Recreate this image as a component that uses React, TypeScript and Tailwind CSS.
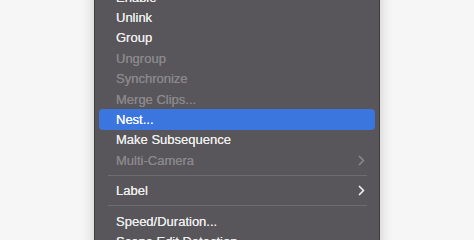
import { ReactNode } from "react";

type Item =
  | { kind: "item"; label: string; disabled?: boolean; active?: boolean; checked?: boolean; submenu?: boolean }
  | { kind: "sep" };

const items: Item[] = [
  { kind: "item", label: "Enable", checked: true },
  { kind: "item", label: "Unlink" },
  { kind: "item", label: "Group" },
  { kind: "item", label: "Ungroup", disabled: true },
  { kind: "item", label: "Synchronize", disabled: true },
  { kind: "item", label: "Merge Clips...", disabled: true },
  { kind: "item", label: "Nest...", active: true },
  { kind: "item", label: "Make Subsequence" },
  { kind: "item", label: "Multi-Camera", disabled: true, submenu: true },
  { kind: "sep" },
  { kind: "item", label: "Label", submenu: true },
  { kind: "sep" },
  { kind: "item", label: "Speed/Duration..." },
  { kind: "item", label: "Scene Edit Detection..." },
];

function Chevron({ dim }: { dim?: boolean }) {
  return (
    <svg width="7" height="11" viewBox="0 0 7 11" className={dim ? "text-[#8a888c]" : "text-[#f0f0f0]"}>
      <polyline points="1.5,1.5 5.5,5.5 1.5,9.5" fill="none" stroke="currentColor" strokeWidth="1.7" strokeLinecap="round" strokeLinejoin="round" />
    </svg>
  );
}

function Row({ item }: { item: Extract<Item, { kind: "item" }> }): ReactNode {
  const color = item.active ? "text-white" : item.disabled ? "text-[#8a888c]" : "text-[#ededed]";
  return (
    <div
      className={`flex h-[20.4px] items-center rounded-[4px] pr-[10px] ${item.active ? "bg-[#3b76df]" : ""} ${color}`}
    >
      <span className="w-[17px] pl-[4px] text-[12px]">{item.checked ? "✓" : ""}</span>
      <span className="flex-1 [text-shadow:0_0_0.4px_currentColor]">{item.label}</span>
      {item.submenu && <Chevron dim={item.disabled} />}
    </div>
  );
}

export default function App() {
  return (
    <div className="h-[240px] w-[474px] overflow-hidden bg-[#f6f6f6]">
      <div
        className="ml-[94px] mt-[-18px] w-[286px] rounded-[6px] border border-[#3c3b3e] bg-[#58565a] px-[4px] pt-[4px] pb-[6px] text-[13px] leading-none shadow-[0_0_14px_rgba(0,0,0,0.18)]"
        style={{ fontFamily: "'Liberation Sans', Arial, sans-serif" }}
      >
        {items.map((it, i) =>
          it.kind === "sep" ? (
            <div key={i} className="flex h-[10px] items-center pl-[9px] pr-[8px]">
              <div className="h-px w-full bg-[#6e6c70]" />
            </div>
          ) : (
            <Row key={i} item={it} />
          )
        )}
      </div>
    </div>
  );
}
